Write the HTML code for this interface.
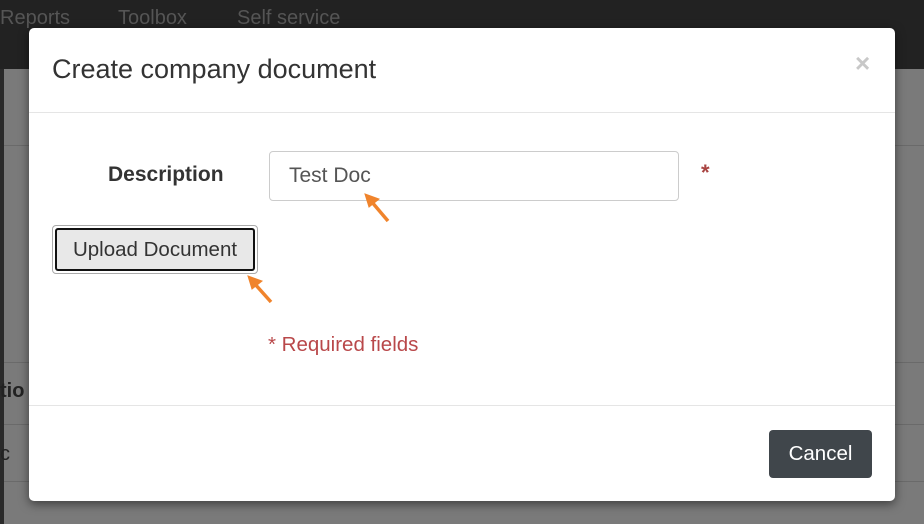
<!DOCTYPE html>
<html><head><meta charset="utf-8"><style>
*{box-sizing:border-box;margin:0;padding:0}
body{width:924px;height:524px;overflow:hidden;position:relative;background:#7a7a7a;font-family:"Liberation Sans",Arial,sans-serif}
.nav{position:absolute;left:0;top:0;width:924px;height:69px;background:#222}
.nav span{position:absolute;top:7px;font-size:20px;color:#555}
.left{position:absolute;left:0;top:69px;width:4px;height:455px;background:#2a2a2a}
.line{position:absolute;left:4px;width:920px;height:1px;background:#6a6a6a}
.modal{position:absolute;left:29px;top:28px;width:866px;height:473px;background:#fff;border-radius:5px;box-shadow:0 3px 10px rgba(0,0,0,.5)}
.title{position:absolute;left:23px;top:26px;font-size:27px;color:#333}
.x{position:absolute;left:826px;top:20px;font-size:26px;color:#c8c8c8;font-weight:bold}
.hr{position:absolute;left:0;width:866px;height:1px;background:#e5e5e5}
.lbl{position:absolute;left:79px;top:135px;font-size:21px;font-weight:bold;color:#333}
.inp{position:absolute;left:240px;top:123px;width:410px;height:50px;border:1px solid #ccc;border-radius:4px;font-size:21px;color:#555;padding:12px 19px}
.star{position:absolute;left:672px;top:132px;color:#a94442;font-size:22px;font-weight:bold}
.up{position:absolute;left:23px;top:197px;width:206px;height:49px;border:1px solid #aaa;border-radius:4px;padding:2px}
.up div{width:100%;height:100%;border:2px solid #111;border-radius:3px;background:#e8e8e8;font-size:20.5px;color:#333;text-align:center;line-height:39px}
.req{position:absolute;left:239px;top:305px;font-size:20.5px;color:#b9484a}
.cancel{position:absolute;left:740px;top:402px;width:103px;height:48px;background:#40464b;border-radius:4px;color:#fff;font-size:20.5px;text-align:center;line-height:48px}
</style></head><body>
<div class="nav"><span style="left:0">Reports</span><span style="left:118px">Toolbox</span><span style="left:237px">Self service</span></div>
<div class="left"></div>
<div class="line" style="top:145px"></div>
<div class="line" style="top:362px"></div>
<div class="line" style="top:424px"></div>
<div class="line" style="top:481px"></div>
<div style="position:absolute;left:0;top:380px;font-size:20px;font-weight:bold;color:#222">tio</div>
<div style="position:absolute;left:0;top:443px;font-size:20px;color:#222">c</div>
<div class="modal">
<div class="title">Create company document</div>
<div class="x">×</div>
<div class="hr" style="top:84px"></div>
<div class="lbl">Description</div>
<div class="inp">Test Doc</div>
<div class="star">*</div>
<div class="up"><div>Upload Document</div></div>
<div class="req">* Required fields</div>
<div class="hr" style="top:377px"></div>
<div class="cancel">Cancel</div>
</div>
<svg style="position:absolute;left:0;top:0" width="924" height="524">
<g stroke="#f0842c" stroke-width="3.5" fill="#f0842c">
<line x1="388" y1="221" x2="371" y2="201"/>
<polygon points="365,194 379,199 369,207" stroke-width="1"/>
<line x1="271" y1="302" x2="254" y2="283"/>
<polygon points="248,276 262,281 252,289" stroke-width="1"/>
</g></svg>
</body></html>
